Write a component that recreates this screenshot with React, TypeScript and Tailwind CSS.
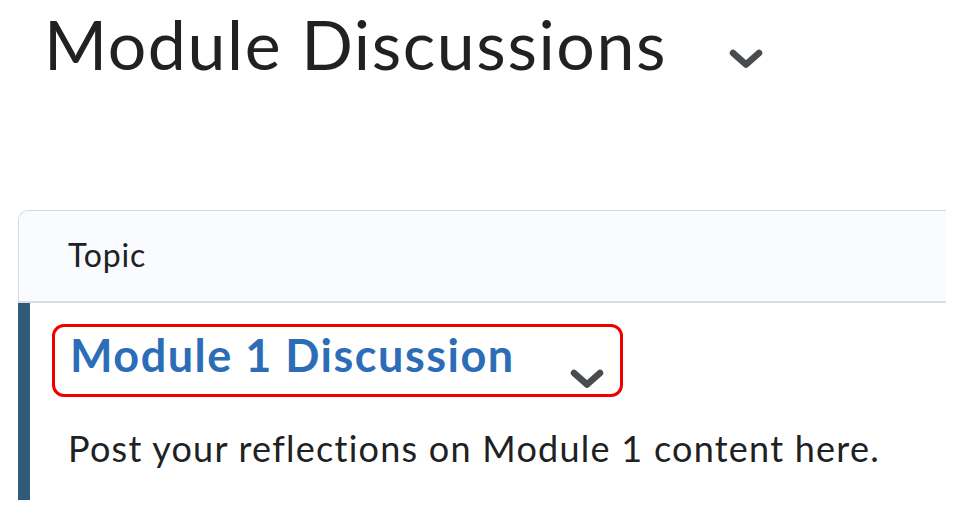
import React from "react";

function Chevron({ className }: { className?: string }) {
  return (
    <svg className={className} width="34" height="20" viewBox="0 0 34 20" fill="none">
      <path d="M4 4 L17 15.5 L30 4" stroke="#494c4e" strokeWidth="6.5" strokeLinecap="round" strokeLinejoin="round" />
    </svg>
  );
}

export default function App() {
  return (
    <div className="w-[964px] h-[528px] bg-white overflow-hidden text-[#202122]" style={{ fontFamily: "Lato, 'Noto Sans', sans-serif" }}>
      <div className="flex items-start pl-[44px] pt-[10px] h-[210px]">
        <h1 className="text-[68px] leading-[68px] font-normal tracking-[1.6px]">Module Discussions</h1>
        <Chevron className="ml-[62px] mt-[39px]" />
      </div>
      <div className="ml-[18px] w-[928px] rounded-tl-[10px] border-t border-l border-[#d3d9e3]">
        <div className="h-[92px] bg-[#f9fbff] border-b-2 border-[#d8dde5] pl-[49px] flex items-center rounded-tl-[10px]">
          <span className="text-[32px] leading-none -mt-[2px] tracking-[0.8px]">Topic</span>
        </div>
        <div className="flex h-[198px] -ml-px">
          <div className="w-[12px] bg-[#2f5a78] h-[197px]" />
          <div className="pl-[22px] pt-[21px]">
            <div className="w-[571px] h-[73px] border-[3px] border-[#ee0000] rounded-[12px] flex items-start pl-[15px]">
              <span className="text-[45px] font-bold leading-none text-[#2c6db8] mt-[6px] tracking-[1.5px]">Module 1 Discussion</span>
              <Chevron className="ml-auto mr-[16px] mt-[42px]" />
            </div>
            <p className="text-[36px] leading-none mt-[33px] pl-[16px] tracking-[1.25px]">Post your reflections on Module 1 content here.</p>
          </div>
        </div>
      </div>
    </div>
  );
}
